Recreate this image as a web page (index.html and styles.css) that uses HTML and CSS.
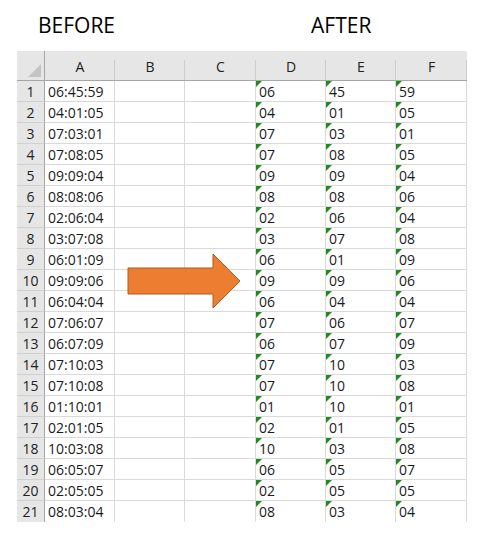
FILE: index.html
```html
<!DOCTYPE html>
<html>
<head>
<meta charset="utf-8">
<link rel="stylesheet" href="styles.css">
</head>
<body>
<div class="titles">
  <div class="title before">BEFORE</div>
  <div class="title after">AFTER</div>
</div>
<div class="sheet-wrap">
<div class="sheet">
  <div class="corner"><span class="tri"></span></div><div class="hd">A</div><div class="hd">B</div><div class="hd">C</div><div class="hd">D</div><div class="hd">E</div><div class="hd">F</div>
  <div class="rn">1</div><div class="c">06:45:59</div><div class="c"></div><div class="c"></div><div class="c t">06</div><div class="c t">45</div><div class="c t">59</div>
  <div class="rn">2</div><div class="c">04:01:05</div><div class="c"></div><div class="c"></div><div class="c t">04</div><div class="c t">01</div><div class="c t">05</div>
  <div class="rn">3</div><div class="c">07:03:01</div><div class="c"></div><div class="c"></div><div class="c t">07</div><div class="c t">03</div><div class="c t">01</div>
  <div class="rn">4</div><div class="c">07:08:05</div><div class="c"></div><div class="c"></div><div class="c t">07</div><div class="c t">08</div><div class="c t">05</div>
  <div class="rn">5</div><div class="c">09:09:04</div><div class="c"></div><div class="c"></div><div class="c t">09</div><div class="c t">09</div><div class="c t">04</div>
  <div class="rn">6</div><div class="c">08:08:06</div><div class="c"></div><div class="c"></div><div class="c t">08</div><div class="c t">08</div><div class="c t">06</div>
  <div class="rn">7</div><div class="c">02:06:04</div><div class="c"></div><div class="c"></div><div class="c t">02</div><div class="c t">06</div><div class="c t">04</div>
  <div class="rn">8</div><div class="c">03:07:08</div><div class="c"></div><div class="c"></div><div class="c t">03</div><div class="c t">07</div><div class="c t">08</div>
  <div class="rn">9</div><div class="c">06:01:09</div><div class="c"></div><div class="c"></div><div class="c t">06</div><div class="c t">01</div><div class="c t">09</div>
  <div class="rn">10</div><div class="c">09:09:06</div><div class="c"></div><div class="c"></div><div class="c t">09</div><div class="c t">09</div><div class="c t">06</div>
  <div class="rn">11</div><div class="c">06:04:04</div><div class="c"></div><div class="c"></div><div class="c t">06</div><div class="c t">04</div><div class="c t">04</div>
  <div class="rn">12</div><div class="c">07:06:07</div><div class="c"></div><div class="c"></div><div class="c t">07</div><div class="c t">06</div><div class="c t">07</div>
  <div class="rn">13</div><div class="c">06:07:09</div><div class="c"></div><div class="c"></div><div class="c t">06</div><div class="c t">07</div><div class="c t">09</div>
  <div class="rn">14</div><div class="c">07:10:03</div><div class="c"></div><div class="c"></div><div class="c t">07</div><div class="c t">10</div><div class="c t">03</div>
  <div class="rn">15</div><div class="c">07:10:08</div><div class="c"></div><div class="c"></div><div class="c t">07</div><div class="c t">10</div><div class="c t">08</div>
  <div class="rn">16</div><div class="c">01:10:01</div><div class="c"></div><div class="c"></div><div class="c t">01</div><div class="c t">10</div><div class="c t">01</div>
  <div class="rn">17</div><div class="c">02:01:05</div><div class="c"></div><div class="c"></div><div class="c t">02</div><div class="c t">01</div><div class="c t">05</div>
  <div class="rn">18</div><div class="c">10:03:08</div><div class="c"></div><div class="c"></div><div class="c t">10</div><div class="c t">03</div><div class="c t">08</div>
  <div class="rn">19</div><div class="c">06:05:07</div><div class="c"></div><div class="c"></div><div class="c t">06</div><div class="c t">05</div><div class="c t">07</div>
  <div class="rn">20</div><div class="c">02:05:05</div><div class="c"></div><div class="c"></div><div class="c t">02</div><div class="c t">05</div><div class="c t">05</div>
  <div class="rn last">21</div><div class="c last">08:03:04</div><div class="c last"></div><div class="c last"></div><div class="c t last">08</div><div class="c t last">03</div><div class="c t last">04</div>
</div>
<svg class="arrow" width="115" height="56" viewBox="0 0 115 56">
  <polygon points="1,15 86,15 86,1 113,28 86,55 86,41 1,41" fill="#ED7D31" stroke="#AE5A21" stroke-width="1"/>
</svg>
</div>
</body>
</html>
```
FILE: styles.css
```css
html, body {
  margin: 0;
  padding: 0;
  background: #ffffff;
}
body {
  width: 478px;
  height: 537px;
  overflow: hidden;
  font-family: "Open Sans", "Noto Sans", sans-serif;
  color: #1a1a1a;
}
.titles {
  display: flex;
  height: 51px;
  box-sizing: border-box;
  padding-top: 11px;
}
.title {
  font-size: 21px;
  line-height: 28px;
  color: #000;
}
.before {
  margin-left: 38px;
}
.after {
  margin-left: 196px;
}
.sheet-wrap {
  position: relative;
  margin-left: 17px;
  width: 450px;
}
.sheet {
  display: grid;
  grid-template-columns: 28px 70px 70px 71px 70px 70px 71px;
  grid-template-rows: 30px;
  grid-auto-rows: 21px;
  font-size: 14px;
}
.corner {
  position: relative;
  background: #e6e6e6;
  border-right: 1px solid #a6a6a6;
  border-bottom: 1px solid #a6a6a6;
  box-sizing: border-box;
}
.tri {
  position: absolute;
  right: 3px;
  bottom: 3px;
  width: 0;
  height: 0;
  border-style: solid;
  border-width: 0 0 13px 13px;
  border-color: transparent transparent #c4c4c4 transparent;
}
.hd {
  background: linear-gradient(#cdcdcd, #cdcdcd) right bottom / 1px 20px no-repeat, #e6e6e6;
  border-bottom: 1px solid #a6a6a6;
  box-sizing: border-box;
  display: flex;
  align-items: flex-end;
  justify-content: center;
  padding-bottom: 3px;
  line-height: 20px;
  color: #222;
}
.rn {
  background: #e6e6e6;
  border-right: 1px solid #a6a6a6;
  border-bottom: 1px solid #d0d0d0;
  box-sizing: border-box;
  text-align: center;
  line-height: 20px;
  padding-top: 1px;
  color: #222;
}
.c {
  position: relative;
  border-right: 1px solid #dadada;
  border-bottom: 1px solid #dadada;
  box-sizing: border-box;
  padding-left: 3px;
  padding-top: 1px;
  line-height: 20px;
  white-space: nowrap;
}
.last {
  border-bottom: none;
}
.t::before {
  content: "";
  position: absolute;
  left: 0;
  top: 0;
  width: 0;
  height: 0;
  border-style: solid;
  border-width: 6px 6px 0 0;
  border-color: #1f8a1f transparent transparent transparent;
}
.arrow {
  position: absolute;
  left: 110px;
  top: 202px;
}
```
